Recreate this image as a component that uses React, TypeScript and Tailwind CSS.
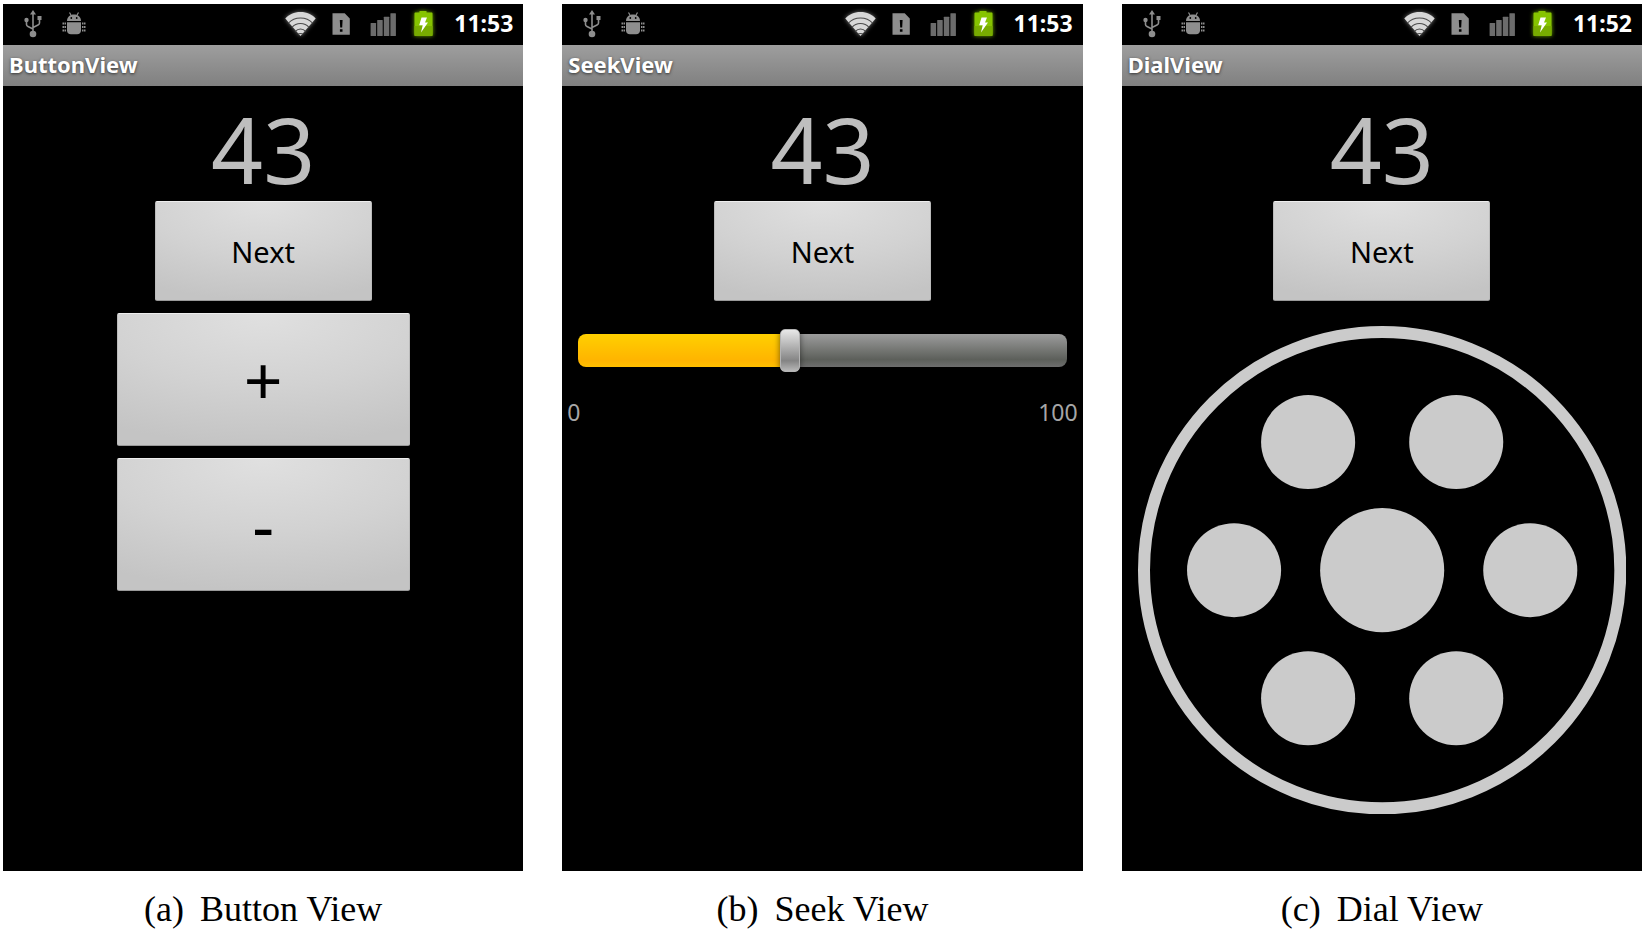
import { useState, ReactNode } from "react";

function UsbIcon() {
    return (
        <svg className="size-[41px]" viewBox="0 0 41 41" fill="none" stroke="#8e8e8e" strokeWidth="1.6" aria-hidden="true">
            <path d="M20 9v20M13.500 16v4.500c0 1 .5 1.500 1.500 2l5 2.500M26.500 14v5c0 1-.5 1.500-1.500 2L20 23.500" />
            <path d="M20 6l3 4.500h-6z" fill="#8e8e8e" stroke="none" />
            <circle cx="20" cy="30" r="3.300" fill="#8e8e8e" stroke="none" />
            <circle cx="13.500" cy="16" r="2.200" fill="#8e8e8e" stroke="none" />
            <rect x="24.500" y="12" width="4" height="4" fill="#8e8e8e" stroke="none" />
        </svg>
    )
}

function BugIcon() {
    return (
        <svg className="size-[41px]" viewBox="0 0 41 41" fill="#8e8e8e" aria-hidden="true">
            <path d="M13 17c0-4 3-6.500 7-6.500s7 2.500 7 6.500z" />
            <path d="M15.500 8.500l2 3.500M24.500 8.500l-2 3.500" stroke="#8e8e8e" strokeWidth="1.200" />
            <circle cx="17.300" cy="14" r="0.900" fill="#000" />
            <circle cx="22.700" cy="14" r="0.900" fill="#000" />
            <path d="M13 18.300h14v8c0 2.500-1.500 3.900-4 3.900h-6c-2.500 0-4-1.400-4-3.900z" />
            <path d="M8.500 19.500h3.500M8.500 23h3.500M8.500 26.500h3.500M28 19.500h3.500M28 23h3.500M28 26.500h3.500" stroke="#8e8e8e" strokeWidth="1.800" strokeDasharray="1.500 0.500" />
        </svg>
    )
}

function WifiIcon() {
    return (
        <svg className="size-[41px] drop-shadow-[0_0_2px_#777]" viewBox="0 0 41 41" aria-hidden="true">
            <path d="M20.500 32L5.300 14.500C9 10.500 14 8 20.500 8s11.500 2.500 15.200 6.500z" fill="#d8d8d8" />
            <path
                d="M8.500 19c3-3.300 7-5 12-5s9 1.700 12 5M12 23.300c2-2.400 5-3.800 8.500-3.800s6.500 1.400 8.500 3.800M15.500 27.300c1.200-1.500 3-2.300 5-2.300s3.800.8 5 2.300M18 30.200c1-.9 4-.9 5 0"
                fill="none"
                stroke="#4a4a4a"
                strokeWidth="1.100"
            />
        </svg>
    )
}

function SimIcon() {
    return (
        <svg className="size-[41px]" viewBox="0 0 41 41" aria-hidden="true">
            <path d="M11.500 9.300h12.200l5.100 5.200v16.200H11.500z" fill="#8e8e8e" />
            <path d="M18.800 16h2.800l-.4 7.500h-2zM18.900 25.300h2.600v2.500h-2.600z" fill="#000" />
        </svg>
    )
}

function SignalIcon() {
    return (
        <svg className="size-[41px]" viewBox="0 0 41 41" fill="#6c6c6c" aria-hidden="true">
            <rect x="8.600" y="19" width="5.500" height="13" rx="0.500" />
            <rect x="15.200" y="16" width="5.500" height="16" rx="0.500" />
            <rect x="21.800" y="12.700" width="5.500" height="19.300" rx="0.500" />
            <rect x="28.400" y="9.300" width="5.500" height="22.700" rx="0.500" />
        </svg>
    )
}

function BatteryIcon() {
    return (
        <svg className="size-[41px] drop-shadow-[0_0_2px_#6fa800]" viewBox="0 0 41 41" aria-hidden="true">
            <path d="M16.500 7h7v1.500h5c.6 0 1 .4 1 1v21.500c0 .6-.4 1-1 1h-16c-.6 0-1-.4-1-1V9.500c0-.6.4-1 1-1h4z" fill="#86c400" />
            <path d="M11.500 22h18v9c0 .6-.4 1-1 1h-16c-.6 0-1-.4-1-1z" fill="#78ac00" />
            <path d="M18.500 13.500h5.500l-2 5h3l-7 10 1.700-7.300h-3.500z" fill="#fff" />
        </svg>
    )
}

interface ScreenProps {
    title: string
    time: string
    caption: string
    letter: string
    children?: ReactNode
}

function Screen({ title, time, caption, letter, children }: ScreenProps) {
    return (
        <figure className="min-w-0 flex-1 flex flex-col">
            <div className="flex flex-col min-h-[867px] bg-black font-['Noto_Sans',sans-serif]">
                <div className="flex items-center h-[41px] px-[10px]">
                    <UsbIcon />
                    <BugIcon />
                    <div className="ml-auto flex items-center">
                        <WifiIcon />
                        <SimIcon />
                        <SignalIcon />
                        <BatteryIcon />
                        <time className="ml-[10px] text-[23px] leading-[38px] pb-[3px] font-bold text-white">{time}</time>
                    </div>
                </div>
                <h1 className="h-[41px] px-[6px] bg-linear-to-b from-[#9e9e9e] to-[#808080] text-[22px] leading-[38px] font-bold text-white text-shadow-[0_1px_3px_#333]">
                    {title}
                </h1>
                <div className="flex flex-col items-center">
                    <output className="h-[115px] text-[91px] leading-[126px] text-[#bebebe]">43</output>
                    <ViewButton className="w-[217px] h-[100px] text-[29px]">Next</ViewButton>
                    {children}
                </div>
            </div>
            <figcaption className="flex justify-center gap-4 mt-[18px] font-['Liberation_Serif',serif] text-[36px] leading-[40px] text-black">
                <span>({letter})</span>
                <span>{caption}</span>
            </figcaption>
        </figure>
    )
}

interface ViewButtonProps {
    className: string
    onClick?: () => void
    children: ReactNode
}

function ViewButton({ className, onClick, children }: ViewButtonProps) {
    return (
        <button
            type="button"
            onClick={onClick}
            className={`flex items-center justify-center rounded-[2px] border border-t-[#eee] border-x-[#bbb] border-b-[#999] bg-[radial-gradient(100%_100%_at_top,#e0e0e0,#d2d2d2_55%,#c4c4c4)] leading-none text-black ${className}`}
        >
            {children}
        </button>
    )
}

function SeekBar() {
    const [value, setValue] = useState(43)

    return (
        <div className="w-full mt-[33px]">
            <div className="px-4">
                <input
                    type="range"
                    aria-label="Value"
                    min={0}
                    max={100}
                    value={value}
                    onChange={(event) => setValue(Number(event.target.value))}
                    // the yellow part ends under the thumb
                    style={{ backgroundSize: `${value}% 100%, 100% 100%` }}
                    className="block w-full h-[33px] appearance-none rounded-[8px] bg-no-repeat bg-[linear-gradient(#ffd000,#ffb400_80%,#ffbe00),linear-gradient(#9c9c9c,#5c5f5a_78%,#6e6e6e)] [&::-webkit-slider-runnable-track]:h-[33px] [&::-webkit-slider-thumb]:appearance-none [&::-webkit-slider-thumb]:-mt-[5px] [&::-webkit-slider-thumb]:h-[43px] [&::-webkit-slider-thumb]:w-[20px] [&::-webkit-slider-thumb]:rounded-[5px] [&::-webkit-slider-thumb]:border [&::-webkit-slider-thumb]:border-[#b4b4b4] [&::-webkit-slider-thumb]:bg-[linear-gradient(#e8e8e8,#848484_75%,#b8b8b8)] [&::-webkit-slider-thumb]:shadow-[0_0_6px_#0008]"
                />
            </div>
            <div className="flex justify-between mt-[29px] px-[5px] text-[23px] leading-[32px] text-[#a6a6a6]">
                <span>0</span>
                <span>100</span>
            </div>
        </div>
    )
}

// finger holes, placed around the centre of the dial
const holes = [
    { x: 96, y: 244 },
    { x: 170, y: 116 },
    { x: 318, y: 116 },
    { x: 392, y: 244 },
    { x: 318, y: 372 },
    { x: 170, y: 372 },
]

function Dial() {
    return (
        <div className="w-full mt-[25px] px-4">
            <svg className="block w-full" viewBox="0 0 488 488" fill="#cbcbcb" role="img" aria-label="Dial">
                <circle cx="244" cy="244" r="238" fill="none" stroke="#cbcbcb" strokeWidth="12" />
                <circle cx="244" cy="244" r="62" />
                {holes.map((hole) => (
                    <circle key={`${hole.x}-${hole.y}`} cx={hole.x} cy={hole.y} r="47" />
                ))}
            </svg>
        </div>
    )
}

export default function App() {
    return (
        <main className="flex gap-[39px] min-h-screen pt-1 pl-[3px] pr-1 bg-white">
            <Screen title="ButtonView" time="11:53" letter="a" caption="Button View">
                <div className="flex flex-col gap-3 mt-3">
                    <ViewButton className="w-[293px] h-[133px] text-[68px]">+</ViewButton>
                    <ViewButton className="w-[293px] h-[133px] text-[68px]">-</ViewButton>
                </div>
            </Screen>
            <Screen title="SeekView" time="11:53" letter="b" caption="Seek View">
                <SeekBar />
            </Screen>
            <Screen title="DialView" time="11:52" letter="c" caption="Dial View">
                <Dial />
            </Screen>
        </main>
    )
}
